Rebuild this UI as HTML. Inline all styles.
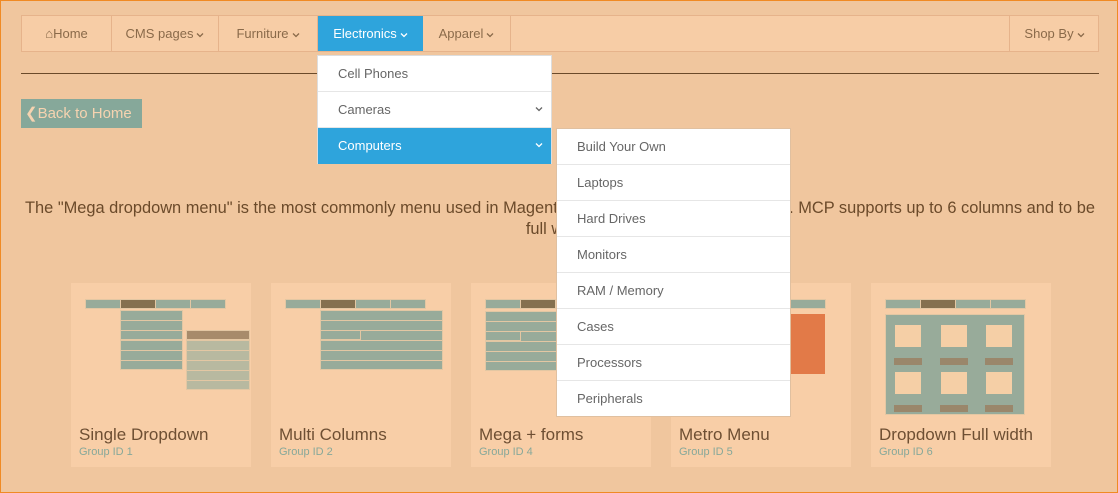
<!DOCTYPE html>
<html><head><meta charset="utf-8"><style>
*{box-sizing:border-box;margin:0;padding:0}
body{width:1118px;height:493px;overflow:hidden;background:#f0c69e;font-family:"Liberation Sans",sans-serif;position:relative;border:1px solid #f08a24}
.a{position:absolute}
.nav{left:20px;top:14px;width:1078px;height:37px;background:#f7cda6;border:1px solid #e6b38b}
.ni{position:absolute;top:0;height:35px;line-height:35px;font-size:13px;color:#8a6a4a;text-align:center;border-right:1px solid #e6b38b}
.dd{background:#fff;border:1px solid #ddd}
.di{height:36px;line-height:36px;padding-left:20px;font-size:13px;color:#666;border-bottom:1px solid #e6e6e6;position:relative}
.chev{position:absolute;right:8px;top:14px}
svg.c{width:8px;height:6px;vertical-align:middle;margin-left:3px}
.card{background:#f8cea7;width:180px;height:184px;top:282px}
.ct{position:absolute;left:8px;top:142px;font-size:17px;color:#6e4f33}
.cg{position:absolute;left:8px;top:163px;font-size:11px;color:#86a89a}
.bar{position:absolute;height:10px;background:#98ab9a;border:1px solid #e3c7a3}
.dk{background:#85704f}
.g{position:absolute;background:#98ab9a;border:1px solid #e3c7a3}
</style></head><body>
<svg width="0" height="0" style="position:absolute"><defs><symbol id="cv" viewBox="0 0 8 6"><path d="M1 1.5L4 4.5L7 1.5" fill="none" stroke="currentColor" stroke-width="1.3"/></symbol></defs></svg>
<div class="a nav">
<div class="ni" style="left:0;width:90px">&#8962;Home</div>
<div class="ni" style="left:90px;width:107px">CMS pages<svg class="c"><use href="#cv"/></svg></div>
<div class="ni" style="left:197px;width:99px">Furniture<svg class="c"><use href="#cv"/></svg></div>
<div class="ni" style="left:296px;width:105px;background:#2ea4dc;color:#fff;border:none">Electronics<svg class="c"><use href="#cv"/></svg></div>
<div class="ni" style="left:401px;width:88px">Apparel<svg class="c"><use href="#cv"/></svg></div>
<div class="ni" style="left:987px;width:90px;border-right:none;border-left:1px solid #e6b38b">Shop By<svg class="c"><use href="#cv"/></svg></div>
</div>
<div class="a" style="left:20px;top:72px;width:1078px;height:1px;background:#6b4a2a"></div>
<div class="a" style="left:20px;top:98px;width:121px;height:29px;background:#86a89a;color:#f6d3b0;font-size:15px;line-height:29px;padding-left:4px">&#10094;Back to Home</div>
<div class="a" style="left:16px;top:197px;width:1086px;text-align:center;font-size:16.4px;color:#6b4a2a;line-height:21px">The "Mega dropdown menu" is the most commonly menu used in Magento store with many custom forms. MCP supports up to 6 columns and to be full width.</div>

<div class="a card" style="left:70px"><div class="ct">Single Dropdown</div><div class="cg">Group ID 1</div>
<div class="bar" style="left:14px;top:16px;width:36px"></div><div class="bar dk" style="left:49px;top:16px;width:36px"></div><div class="bar" style="left:84px;top:16px;width:36px"></div><div class="bar" style="left:119px;top:16px;width:36px"></div>
<div class="g" style="left:49px;top:27px;width:63px;height:60px;background:repeating-linear-gradient(#98ab9a 0 9px,#e3c7a3 9px 10px)"></div>
<div class="g dk" style="left:49px;top:47px;width:63px;height:10px"></div>
<div class="g" style="left:115px;top:47px;width:64px;height:60px;background:repeating-linear-gradient(#b8b9a0 0 9px,#e3c7a3 9px 10px)"></div>
<div class="g" style="left:115px;top:47px;width:64px;height:10px;background:#a78b6b"></div>
</div>
<div class="a card" style="left:270px"><div class="ct">Multi Columns</div><div class="cg">Group ID 2</div>
<div class="bar" style="left:14px;top:16px;width:36px"></div><div class="bar dk" style="left:49px;top:16px;width:36px"></div><div class="bar" style="left:84px;top:16px;width:36px"></div><div class="bar" style="left:119px;top:16px;width:36px"></div>
<div class="g" style="left:49px;top:27px;width:123px;height:60px;background:repeating-linear-gradient(#98ab9a 0 9px,#e3c7a3 9px 10px)"></div>
<div class="g dk" style="left:49px;top:47px;width:41px;height:10px"></div>
</div>
<div class="a card" style="left:470px"><div class="ct">Mega + forms</div><div class="cg">Group ID 4</div>
<div class="bar" style="left:14px;top:16px;width:36px"></div><div class="bar dk" style="left:49px;top:16px;width:36px"></div>
<div class="g" style="left:14px;top:28px;width:90px;height:60px;background:repeating-linear-gradient(#98ab9a 0 9px,#e3c7a3 9px 10px)"></div>
<div class="g dk" style="left:14px;top:48px;width:36px;height:10px"></div>
</div>
<div class="a card" style="left:670px"><div class="ct">Metro Menu</div><div class="cg">Group ID 5</div>
<div class="bar" style="left:110px;top:16px;width:45px"></div>
<div class="a" style="left:110px;top:31px;width:44px;height:60px;background:#e27a48"></div>
</div>
<div class="a card" style="left:870px"><div class="ct">Dropdown Full width</div><div class="cg">Group ID 6</div>
<div class="bar" style="left:14px;top:16px;width:36px"></div><div class="bar dk" style="left:49px;top:16px;width:36px"></div><div class="bar" style="left:84px;top:16px;width:36px"></div><div class="bar" style="left:119px;top:16px;width:36px"></div>
<div class="g" style="left:14px;top:31px;width:140px;height:101px"></div>
<div class="a" style="left:20px;top:38px;width:130px;height:92px;background:
linear-gradient(#f5cfa6,#f5cfa6) 4px 4px/26px 22px no-repeat,linear-gradient(#f5cfa6,#f5cfa6) 50px 4px/26px 22px no-repeat,linear-gradient(#f5cfa6,#f5cfa6) 95px 4px/26px 22px no-repeat,
linear-gradient(#f5cfa6,#f5cfa6) 4px 51px/26px 22px no-repeat,linear-gradient(#f5cfa6,#f5cfa6) 50px 51px/26px 22px no-repeat,linear-gradient(#f5cfa6,#f5cfa6) 95px 51px/26px 22px no-repeat,
linear-gradient(#9a876b,#9a876b) 3px 37px/28px 7px no-repeat,linear-gradient(#9a876b,#9a876b) 49px 37px/28px 7px no-repeat,linear-gradient(#9a876b,#9a876b) 94px 37px/28px 7px no-repeat,
linear-gradient(#9a876b,#9a876b) 3px 84px/28px 7px no-repeat,linear-gradient(#9a876b,#9a876b) 49px 84px/28px 7px no-repeat,linear-gradient(#9a876b,#9a876b) 94px 84px/28px 7px no-repeat"></div>
</div>

<div class="a dd" style="left:316px;top:54px;width:235px;height:109px">
<div class="di">Cell Phones</div>
<div class="di">Cameras<svg class="c chev"><use href="#cv"/></svg></div>
<div class="di" style="background:#2ea4dc;color:#fff;border:none">Computers<svg class="c chev"><use href="#cv"/></svg></div>
</div>
<div class="a dd" style="left:555px;top:127px;width:235px;height:289px;border-color:#e0c0a0">
<div class="di">Build Your Own</div><div class="di">Laptops</div><div class="di">Hard Drives</div><div class="di">Monitors</div><div class="di">RAM / Memory</div><div class="di">Cases</div><div class="di">Processors</div><div class="di" style="border:none">Peripherals</div>
</div>
</body></html>
